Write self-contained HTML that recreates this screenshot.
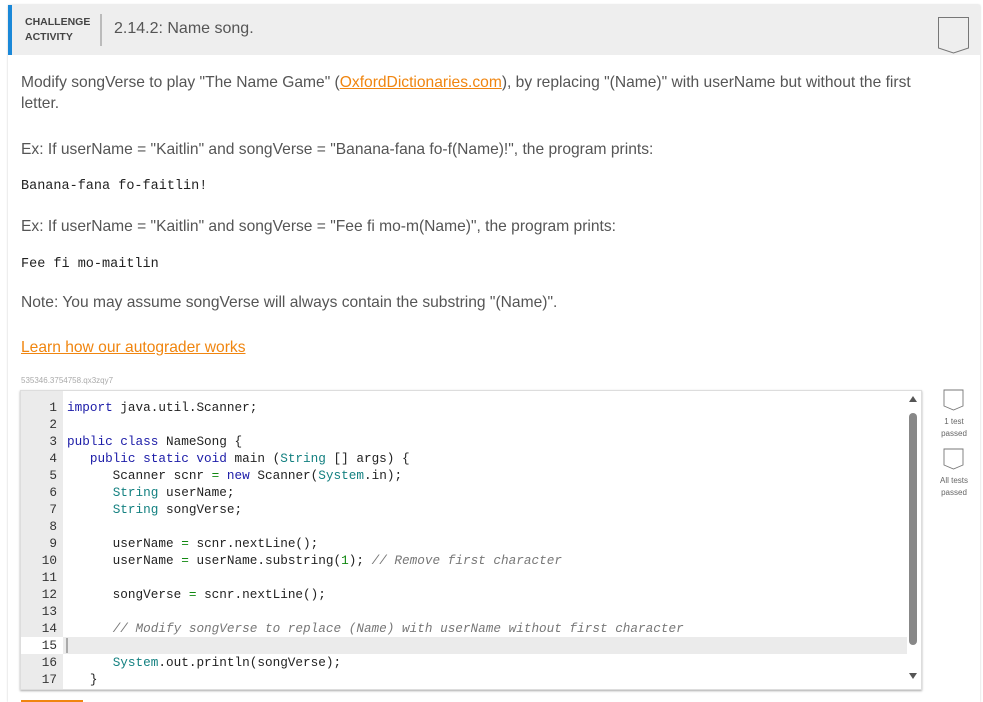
<!DOCTYPE html>
<html><head><style>
body{margin:0;background:#fff;width:983px;height:702px;overflow:hidden;font-family:"Liberation Sans",sans-serif;}
.card{position:absolute;left:8px;top:5px;width:972px;height:697px;background:#fff;box-shadow:0 0 2px #ccc;}
.hdr{position:absolute;left:0;top:0;width:972px;height:50px;background:#eee;}
.bar{position:absolute;left:0;top:0;width:4px;height:50px;background:#1a88d8;}
.ca{position:absolute;left:17px;top:10px;font-size:10.5px;font-weight:bold;color:#444;line-height:15px;}
.sep{position:absolute;left:92px;top:9px;width:2px;height:32px;background:#bbb;}
.ttl{position:absolute;left:106px;top:15px;font-size:16px;color:#555;}
.p{position:absolute;left:21px;font-size:15.6px;color:#555;line-height:21px;width:915px;}
.m{position:absolute;left:21px;font-family:"Liberation Mono",monospace;font-size:13.5px;color:#222;}
a{color:#f0850f;text-decoration:underline;}
.code{position:absolute;left:20px;top:390px;width:900px;height:298px;border:1px solid #ddd;box-shadow:0 1px 2px #aaa;overflow:hidden;background:#fff;}
.gut{position:absolute;left:0;top:0;width:42px;height:100%;background:#ebebeb;}
.ln{position:absolute;left:0;width:36px;text-align:right;font-family:"Liberation Mono",monospace;font-size:12.7px;color:#333;}
.cl{position:absolute;left:46px;font-family:"Liberation Mono",monospace;font-size:12.7px;color:#222;white-space:pre;}
.k{color:#1c1ca8}.g{color:#118811}.c{color:#777;font-style:italic}.t{color:#138080}
.sb{position:absolute;left:888px;top:22px;width:8px;height:232px;background:#888;border-radius:4px;}
.badge{position:absolute;font-size:8px;color:#666;text-align:center;width:40px;line-height:12px;}
</style></head><body>
<div class="card">
<div class="hdr"><div class="bar"></div><div class="ca">CHALLENGE<br>ACTIVITY</div><div class="sep"></div><div class="ttl">2.14.2: Name song.</div>
<svg style="position:absolute;left:929px;top:11px" width="34" height="38"><path d="M1.5 1.5H31.5V32L16.5 37L1.5 32Z" fill="none" stroke="#777" stroke-width="1"/></svg>
</div>
</div>
<div class="p" style="top:72px">Modify songVerse to play "The Name Game" (<a>OxfordDictionaries.com</a>), by replacing "(Name)" with userName but without the first letter.</div>
<div class="p" style="top:139px">Ex: If userName = "Kaitlin" and songVerse = "Banana-fana fo-f(Name)!", the program prints:</div>
<div class="m" style="top:179px">Banana-fana fo-faitlin!</div>
<div class="p" style="top:216px">Ex: If userName = "Kaitlin" and songVerse = "Fee fi mo-m(Name)", the program prints:</div>
<div class="m" style="top:257px">Fee fi mo-maitlin</div>
<div class="p" style="top:292px">Note: You may assume songVerse will always contain the substring "(Name)".</div>
<div class="p" style="top:337px"><a>Learn how our autograder works</a></div>
<div style="position:absolute;left:21px;top:376px;font-size:8px;color:#aaa">535346.3754758.qx3zqy7</div>
<div class="code">
<div class="gut"></div>
<div style="position:absolute;left:0;top:246px;width:886px;height:17px;background:#ebebeb"></div>
<div style="position:absolute;left:0;top:246px;width:42px;height:17px;background:#fff"></div>
<div style="position:absolute;left:45px;top:247px;width:2px;height:15px;background:#aaa"></div>
<div style="position:absolute;left:888px;top:5px;width:0;height:0;border-left:4px solid transparent;border-right:4px solid transparent;border-bottom:6px solid #555"></div>
<div style="position:absolute;left:888px;top:282px;width:0;height:0;border-left:4px solid transparent;border-right:4px solid transparent;border-top:6px solid #555"></div>
<div class="sb"></div>
<div class="ln" style="top:9px">1</div><div class="ln" style="top:26px">2</div><div class="ln" style="top:43px">3</div><div class="ln" style="top:60px">4</div><div class="ln" style="top:77px">5</div><div class="ln" style="top:94px">6</div><div class="ln" style="top:111px">7</div><div class="ln" style="top:128px">8</div><div class="ln" style="top:145px">9</div><div class="ln" style="top:162px">10</div><div class="ln" style="top:179px">11</div><div class="ln" style="top:196px">12</div><div class="ln" style="top:213px">13</div><div class="ln" style="top:230px">14</div><div class="ln" style="top:247px">15</div><div class="ln" style="top:264px">16</div><div class="ln" style="top:281px">17</div>
<div class="cl" style="top:9px"><span class="k">import</span> java.util.Scanner;</div>
<div class="cl" style="top:43px"><span class="k">public class</span> NameSong {</div>
<div class="cl" style="top:60px">   <span class="k">public static void</span> main (<span class="t">String</span> [] args) {</div>
<div class="cl" style="top:77px">      Scanner scnr <span class="g">=</span> <span class="k">new</span> Scanner(<span class="t">System</span>.in);</div>
<div class="cl" style="top:94px">      <span class="t">String</span> userName;</div>
<div class="cl" style="top:111px">      <span class="t">String</span> songVerse;</div>
<div class="cl" style="top:145px">      userName <span class="g">=</span> scnr.nextLine();</div>
<div class="cl" style="top:162px">      userName <span class="g">=</span> userName.substring(<span class="g">1</span>); <span class="c">// Remove first character</span></div>
<div class="cl" style="top:196px">      songVerse <span class="g">=</span> scnr.nextLine();</div>
<div class="cl" style="top:230px">      <span class="c">// Modify songVerse to replace (Name) with userName without first character</span></div>
<div class="cl" style="top:264px">      <span class="t">System</span>.out.println(songVerse);</div>
<div class="cl" style="top:281px">   }</div>
</div>
<svg style="position:absolute;left:943px;top:389px" width="22" height="22"><path d="M1 1H20V17L10.5 21L1 17Z" fill="none" stroke="#777" stroke-width="0.9"/></svg>
<div class="badge" style="left:934px;top:416px">1 test<br>passed</div>
<svg style="position:absolute;left:943px;top:448px" width="22" height="22"><path d="M1 1H20V17L10.5 21L1 17Z" fill="none" stroke="#777" stroke-width="0.9"/></svg>
<div class="badge" style="left:934px;top:475px">All tests<br>passed</div>
<div style="position:absolute;left:21px;top:700px;width:62px;height:2px;background:#f0850f"></div>
</body></html>
